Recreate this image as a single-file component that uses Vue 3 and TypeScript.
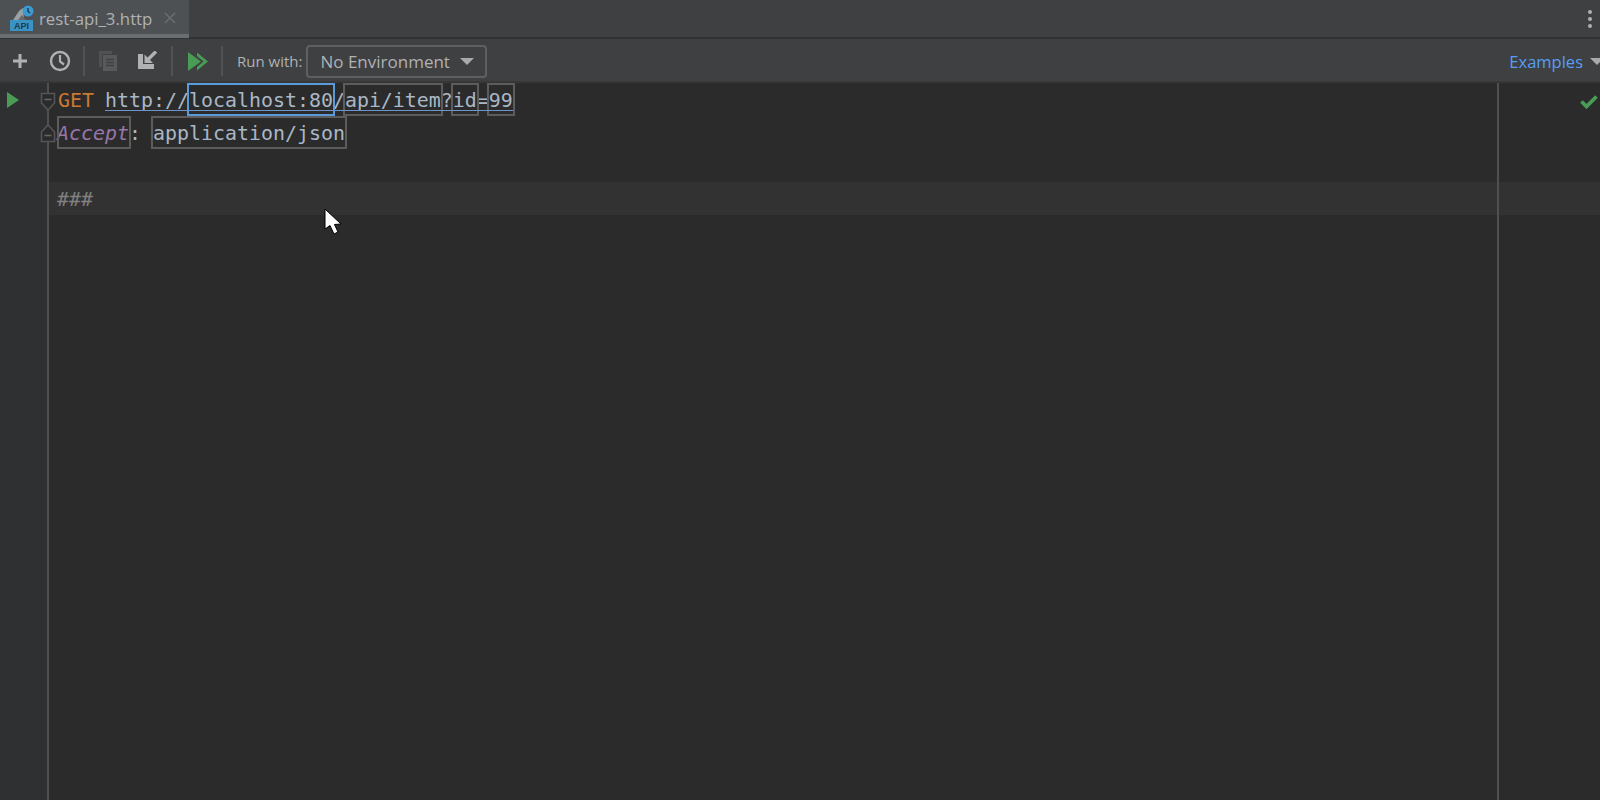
<script setup lang="ts">
const hasIcons = true
</script>

<template>
  <div class="app" v-if="hasIcons">
    <header class="tabbar">
      <div class="tab">
        <svg class="file-icon" width="24" height="26" viewBox="0 0 24 26">
          <path d="M3 15 L9 6 L13 3 L14 15 Z" fill="#9aa0a3" />
          <path d="M8 15 L12 10 L16 15 Z" fill="#666a6c" />
          <circle cx="18" cy="6" r="5.500" fill="#3d9ad1" />
          <path d="M18 3 V6.500 L20 8" stroke="#20323d" stroke-width="1.300" fill="none" />
          <rect x="0" y="15" width="23" height="11" fill="#3a93c4" />
          <text x="11.500" y="24.200" class="api-text" text-anchor="middle">API</text>
        </svg>
        <span class="tab-name">rest-api_3.http</span>
        <svg class="tab-close" width="14" height="14" viewBox="0 0 14 14">
          <path d="M2 2 L12 12 M12 2 L2 12" stroke="#6a6e70" stroke-width="1.500" />
        </svg>
      </div>
      <div class="dots"><i></i><i></i><i></i></div>
    </header>

    <nav class="toolbar">
      <button class="tool">
        <svg width="18" height="18" viewBox="0 0 18 18">
          <path d="M9 2 V16 M2 9 H16" stroke="#afb1b3" stroke-width="3" />
        </svg>
      </button>
      <button class="tool tool-clock">
        <svg width="24" height="24" viewBox="0 0 24 24">
          <circle cx="12" cy="12" r="9" stroke="#afb1b3" stroke-width="2.400" fill="none" />
          <path d="M12 6 V12.500 L16 15.500" stroke="#afb1b3" stroke-width="2.200" fill="none" />
        </svg>
      </button>
      <span class="sep"></span>
      <button class="tool">
        <svg width="20" height="22" viewBox="0 0 20 22">
          <rect x="1" y="1" width="13" height="16" fill="#505152" />
          <rect x="4.500" y="4.500" width="15" height="17" fill="#58595a" stroke="#3e4042" stroke-width="1" />
          <path d="M8 9.500 H16 M8 12.500 H16 M8 15.500 H16" stroke="#3e4042" stroke-width="1.400" />
        </svg>
      </button>
      <button class="tool">
        <svg width="20" height="20" viewBox="0 0 20 20">
          <path d="M0 3 H5 V13 H16 V18 H0 Z" fill="#afb1b3" />
          <path d="M18 0.500 L9 9.500" stroke="#afb1b3" stroke-width="3.400" fill="none" />
          <path d="M6.500 3.500 L6.500 12 L15 12 Z" fill="#afb1b3" />
        </svg>
      </button>
      <span class="sep"></span>
      <button class="tool tool-run">
        <svg width="20" height="19" viewBox="0 0 20 19">
          <path d="M0 0 L13 9.500 L0 19 Z" fill="#499c54" />
          <path d="M9 0.500 L20 9.500 L9 18.500 L9 15 L15.500 9.500 L9 4 Z" fill="#499c54" />
        </svg>
      </button>
      <span class="sep"></span>
      <span class="run-label">Run with:</span>
      <div class="env">
        <span class="env-name">No Environment</span>
        <span class="caret"></span>
      </div>
      <div class="spring"></div>
      <a class="examples">Examples</a>
      <span class="caret examples-caret"></span>
    </nav>

    <main class="editor">
      <aside class="gutter">
        <svg class="run-arrow" width="12" height="16" viewBox="0 0 12 16">
          <path d="M0 0 L12 8 L0 16 Z" fill="#499c54" />
        </svg>
      </aside>
      <section class="code">
        <svg class="fold fold-open" width="16" height="20" viewBox="0 0 16 20">
          <path d="M1.500 1.500 H14.500 V11 L8 18 L1.500 11 Z" fill="#2b2b2b" stroke="#555" stroke-width="1.600" />
          <path d="M4.500 7.500 H11.500" stroke="#666" stroke-width="1.600" />
        </svg>
        <svg class="fold fold-close" width="16" height="20" viewBox="0 0 16 20">
          <path d="M1.500 18.500 H14.500 V9 L8 2 L1.500 9 Z" fill="#2b2b2b" stroke="#555" stroke-width="1.600" />
          <path d="M4.500 12.500 H11.500" stroke="#666" stroke-width="1.600" />
        </svg>
        <div class="line"><span class="kw">GET</span> <span class="url">http://<span class="box active">localhost:80</span>/<span class="box">api/item</span>?<span class="box">id</span>=<span class="box">99</span></span></div>
        <div class="line"><span class="box header">Accept</span>: <span class="box">application/json</span></div>
        <div class="line"></div>
        <div class="line current"><span class="sep-text">###</span></div>
        <div class="margin"></div>
        <svg class="check" width="18" height="15" viewBox="0 0 18 15">
          <path d="M1.500 7.500 L6.500 12.500 L16.500 2.500" stroke="#499c54" stroke-width="3.800" fill="none" />
        </svg>
        <svg class="cursor" width="20" height="28" viewBox="0 0 20 28">
          <path d="M1 1 V21 L6 17.500 L10 26 L14 24 L10.500 16.500 L17 16 Z" fill="#fff" stroke="#000" stroke-width="1" />
        </svg>
      </section>
    </main>
  </div>
</template>

<style>
html, body { margin: 0; background: #2b2b2b; }
</style>

<style scoped>
.app {
  width: 1600px;
  height: 800px;
  display: flex;
  flex-direction: column;
  overflow: hidden;
  background: #2b2b2b;
  font-family: "Open Sans", "Noto Sans", sans-serif;
}
.tabbar {
  height: 39px;
  flex: none;
  display: flex;
  justify-content: space-between;
  background: #3e4042;
  border-bottom: 2px solid #323232;
  box-sizing: border-box;
}
.tab {
  width: 189px;
  display: flex;
  align-items: center;
  box-sizing: border-box;
  padding: 2px 0 0 10px;
  background: #4e5153;
  border-bottom: 4px solid #6b6e70;
  margin-bottom: -1px;
}
.file-icon { flex: none; margin-right: 5px; }
.api-text { font: 700 9px "Liberation Sans", sans-serif; fill: #1f3a4a; }
.tab-name { font-size: 16.800px; color: #afb1b3; white-space: nowrap; }
.tab-close { margin-left: 11px; flex: none; }
.dots {
  display: flex;
  flex-direction: column;
  gap: 3px;
  padding: 10px 8px 0 0;
}
.dots i { width: 4px; height: 4px; border-radius: 50%; background: #afb1b3; }
.toolbar {
  height: 44px;
  flex: none;
  display: flex;
  align-items: center;
  background: #3e4042;
  border-bottom: 2px solid #353739;
  box-sizing: border-box;
  padding-top: 2px;
}
.tool {
  all: unset;
  width: 40px;
  display: flex;
  justify-content: center;
  align-items: center;
}
.tool-clock { padding-right: 1px; width: 39px; }
.tool-run { margin-left: 2px; }
.sep { width: 2px; height: 30px; background: #505355; flex: none; margin: 0 3px; }
.run-label { font-size: 15px; color: #afb1b3; margin: 0 4px 0 11px; white-space: nowrap; }
.env {
  width: 181px;
  height: 33px;
  box-sizing: border-box;
  border: 2px solid #5e6060;
  border-radius: 4px;
  display: flex;
  align-items: center;
  gap: 10px;
  padding: 0 12px;
  font-size: 17px;
  color: #afb1b3;
}
.env-name { white-space: nowrap; }
.caret {
  width: 0;
  height: 0;
  flex: none;
  border-left: 7px solid transparent;
  border-right: 7px solid transparent;
  border-top: 7px solid #a8aaac;
}
.spring { flex: 1; }
.examples { font-size: 16.500px; color: #589df6; margin-right: 7px; }
.examples-caret { margin-right: -4px; }
.editor { flex: 1; display: flex; min-height: 0; }
.gutter {
  width: 47px;
  flex: none;
  background: #2f3031;
  border-right: 2px solid #505050;
  box-sizing: content-box;
}
.run-arrow { display: block; margin: 9px 0 0 7px; }
.code {
  flex: 1;
  position: relative;
  font-family: "DejaVu Sans Mono", monospace;
  font-size: 19.930px;
  color: #a9b7c6;
}
.line {
  height: 33px;
  box-sizing: border-box;
  line-height: 33px;
  padding: 1px 0 0 8px;
  white-space: pre;
}
.line.current { background: #323232; }
.kw { color: #cc7832; margin-left: 1px; margin-right: -1px; }
.sep-text { color: #808080; }
.url { position: relative; display: inline-block; }
.url::after {
  content: "";
  position: absolute;
  left: 0;
  right: 0;
  bottom: 6px;
  border-bottom: 1px solid #6e94c8;
}
.box { display: inline-block; height: 33px; position: relative; }
.box::before {
  content: "";
  position: absolute;
  left: -2px;
  right: -2px;
  top: -1px;
  bottom: 1px;
  border: 2px solid #5c5c5c;
  pointer-events: none;
}
.box.active::before { border-color: #5a9ad8; z-index: 1; }
.header { color: #9876aa; font-style: italic; }
.header::before { left: 0; }
.fold { position: absolute; left: -9px; }
.fold-open { top: 9px; }
.fold-close { top: 40px; }
.margin { position: absolute; left: 1448px; top: 0; bottom: 0; width: 2px; background: #505050; }
.check { position: absolute; left: 1531px; top: 11px; }
.cursor { position: absolute; left: 275px; top: 125px; }
</style>
